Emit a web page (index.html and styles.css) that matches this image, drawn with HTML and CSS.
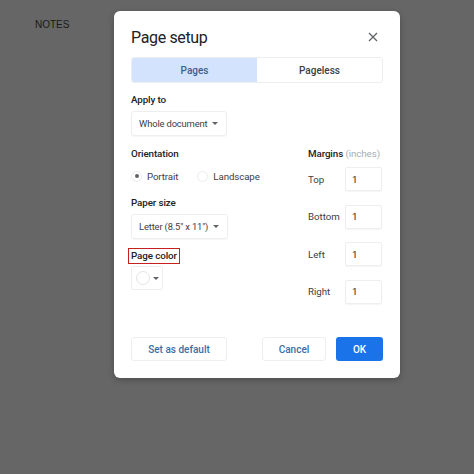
FILE: index.html
```html
<!DOCTYPE html>
<html>
<head>
<meta charset="utf-8">
<link rel="stylesheet" href="styles.css">
</head>
<body>
<div class="doc">NOTES</div>
<div class="dialog">
  <div class="header">
    <div class="title">Page setup</div>
    <div class="close"><svg width="10" height="10" viewBox="0 0 10 10"><path d="M1 1L9 9M9 1L1 9" stroke="#5f6368" stroke-width="1.3"/></svg></div>
  </div>
  <div class="tabs">
    <div class="tab active">Pages</div>
    <div class="tab">Pageless</div>
  </div>
  <div class="body">
    <div class="left">
      <div class="label">Apply to</div>
      <div class="select">Whole document<span class="caret"></span></div>
      <div class="label gap">Orientation</div>
      <div class="radios">
        <div class="radio"><span class="ring on"></span>Portrait</div>
        <div class="radio"><span class="ring"></span>Landscape</div>
      </div>
      <div class="label gap2">Paper size</div>
      <div class="select">Letter (8.5" x 11")<span class="caret"></span></div>
      <div class="label gap3"><span class="hl">Page color</span></div>
      <div class="swatch"><span class="circle"></span><span class="caret"></span></div>
    </div>
    <div class="right">
      <div class="label">Margins <span class="muted">(inches)</span></div>
      <div class="mrow first"><span>Top</span><div class="num">1</div></div>
      <div class="mrow"><span>Bottom</span><div class="num">1</div></div>
      <div class="mrow"><span>Left</span><div class="num">1</div></div>
      <div class="mrow"><span>Right</span><div class="num">1</div></div>
    </div>
  </div>
  <div class="footer">
    <div class="btn default">Set as default</div>
    <div class="spacer"></div>
    <div class="btn cancel">Cancel</div>
    <div class="btn ok">OK</div>
  </div>
</div>
</body>
</html>
```
FILE: styles.css
```css
* { box-sizing: border-box; }
html, body { margin: 0; height: 100%; }
body {
  background: #666666;
  font-family: Roboto, "Noto Sans", "Liberation Sans", sans-serif;
  color: #202124;
  white-space: nowrap;
}
.doc {
  padding: 19px 0 0 35px;
  font-size: 10px;
  font-family: "Liberation Sans", Arial, sans-serif;
  color: #1a1a1a;
}
.dialog {
  position: absolute;
  left: 114px;
  top: 11px;
  width: 286px;
  height: 367px;
  background: #fff;
  border-radius: 6px;
  padding: 13px 17px 17px 17px;
  display: flex;
  flex-direction: column;
  box-shadow: 0 2px 6px rgba(0,0,0,0.25);
}
.header {
  display: flex;
  align-items: center;
  justify-content: space-between;
  height: 26px;
}
.title { font-size: 16px; color: #202124; letter-spacing: -0.35px; }
.close { width: 10px; height: 10px; margin-right: 5px; display: flex; }
.tabs {
  margin-top: 7px;
  display: flex;
  height: 26px;
  border: 1px solid #eceef0;
  border-radius: 3px;
  overflow: hidden;
}
.tab {
  flex: 1;
  display: flex;
  align-items: center;
  justify-content: center;
  font-size: 10px;
  font-weight: 500;
  color: #3c4043;
}
.tab.active { background: #d3e3fd; color: #3b5f8f; }
.body { display: flex; margin-top: 9px; }
.left { width: 177px; display: flex; flex-direction: column; align-items: flex-start; }
.right { flex: 1; padding-top: 54px; }
.label { font-size: 9.8px; font-weight: 500; line-height: 16px; color: #202124; letter-spacing: -0.1px; }
.muted { color: #a8adb3; font-weight: 400; }
.gap { margin-top: 10px; }
.gap2 { margin-top: 11px; }
.gap3 { margin-top: 9px; margin-left: -3px; }
.select {
  margin-top: 3px;
  height: 25px;
  border: 1px solid #eceef0;
  border-radius: 3px;
  display: flex;
  align-items: center;
  padding: 0 8px 0 7px;
  font-size: 9.4px;
  letter-spacing: -0.15px;
  color: #3c4043;
  gap: 5px;
  box-shadow: 0 1px 1px rgba(0,0,0,0.04);
}
.caret {
  width: 0; height: 0;
  flex: none;
  border-left: 3px solid transparent;
  border-right: 3px solid transparent;
  border-top: 3px solid #5f6368;
}
.radios { display: flex; margin-top: 6px; height: 16px; gap: 19px; }
.radio { display: flex; align-items: center; font-size: 9.7px; letter-spacing: -0.1px; color: #3c4043; gap: 5px; }
.ring {
  width: 11px; height: 11px;
  border: 1px solid #eaecee;
  border-radius: 50%;
  display: flex; align-items: center; justify-content: center;
}
.ring.on::after {
  content: "";
  width: 4px; height: 4px;
  border-radius: 50%;
  background: #5f6368;
}
.hl {
  display: inline-block;
  border: 1.5px solid #c5221f;
  padding: 0 2px;
  line-height: 14px;
}
.swatch {
  margin-top: 2px;
  width: 32px; height: 24px;
  border: 1px solid #eceef0;
  border-radius: 2px;
  display: flex; align-items: center;
  padding-left: 4px;
  gap: 3px;
}
.circle {
  width: 14px; height: 14px;
  border: 1px solid #e3e5e8;
  border-radius: 50%;
  background: #fff;
}
.mrow {
  display: flex; align-items: center;
  height: 24px;
  margin-top: 13.6px;
  font-size: 9.7px;
  color: #3c4043;
}
.mrow.first { margin-top: 5px; }
.mrow span { width: 37px; }
.num {
  width: 37px; height: 24px;
  border: 1px solid #eceef0;
  border-radius: 2px;
  display: flex; align-items: center;
  padding-left: 6px;
  font-size: 9.7px;
  color: #202124;
  box-shadow: 0 1px 1px rgba(0,0,0,0.04);
}
.footer { margin-top: auto; display: flex; height: 24px; }
.spacer { flex: 1; }
.btn {
  display: flex; align-items: center; justify-content: center;
  font-size: 10px; font-weight: 500;
  border-radius: 3px;
}
.default { width: 96px; border: 1px solid #eceef0; color: #3b6ea5; }
.cancel { width: 64px; border: 1px solid #eceef0; color: #3b6ea5; }
.ok { width: 47px; margin-left: 10px; background: #1a73e8; color: #fff; }
```
